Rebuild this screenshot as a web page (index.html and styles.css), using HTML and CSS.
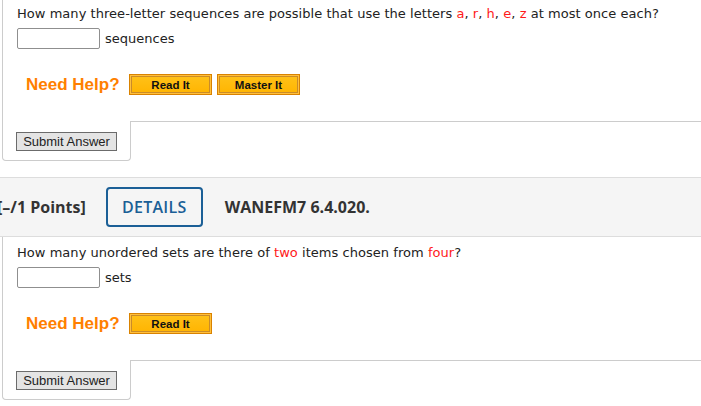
FILE: index.html
```html
<!DOCTYPE html>
<html>
<head>
<meta charset="utf-8">
<link rel="stylesheet" href="styles.css">
</head>
<body>
<div class="q">
  <div class="qbody first">
    <p class="prompt">How many three-letter sequences are possible that use the letters <span class="red">a</span>, <span class="red">r</span>, <span class="red">h</span>, <span class="red">e</span>, <span class="red">z</span> at most once each?</p>
    <div class="answer"><span class="ans"></span><span class="unit">sequences</span></div>
    <div class="help"><span class="need">Need Help?</span><span class="hbtn">Read It</span><span class="hbtn">Master It</span></div>
  </div>
  <div class="foot">
    <div class="submitbox"><span class="submit">Submit Answer</span></div>
    <div class="fill"></div>
  </div>
</div>

<div class="header">
  <span class="points">[–/1 Points]</span>
  <span class="details">DETAILS</span>
  <span class="code">WANEFM7 6.4.020.</span>
</div>

<div class="q">
  <div class="qbody second">
    <p class="prompt">How many unordered sets are there of <span class="red">two</span> items chosen from <span class="red">four</span>?</p>
    <div class="answer"><span class="ans"></span><span class="unit">sets</span></div>
    <div class="help"><span class="need">Need Help?</span><span class="hbtn">Read It</span></div>
  </div>
  <div class="foot">
    <div class="submitbox"><span class="submit">Submit Answer</span></div>
    <div class="fill"></div>
  </div>
</div>
</body>
</html>
```

FILE: styles.css
```css
html, body {
  margin: 0;
  padding: 0;
  background: #fff;
}
body {
  width: 701px;
  overflow: hidden;
  font-family: "DejaVu Sans", Verdana, sans-serif;
  color: #222;
}
.q {
  margin-left: 2px;
}
.qbody {
  border-left: 1px solid #cccccc;
  padding-left: 14px;
  padding-bottom: 26px;
}
.qbody.first { padding-top: 5px; }
.qbody.second { padding-top: 7px; }
.prompt {
  margin: 0 0 5px 0;
  font-size: 13px;
  letter-spacing: 0.04px;
  line-height: 18px;
  height: 18px;
  white-space: nowrap;
}
.red { color: #ff1a1a; }
.answer {
  display: flex;
  align-items: center;
  height: 21px;
}
.ans {
  display: block;
  width: 81px;
  height: 19px;
  border: 1px solid #8f8f8f;
  border-radius: 2px;
  background: #fff;
}
.unit {
  margin-left: 5px;
  font-size: 13px;
  color: #222;
}
.help {
  display: flex;
  align-items: center;
  margin-top: 25px;
  height: 21px;
}
.need {
  margin-left: 9px;
  margin-right: 11px;
  font-family: "Liberation Sans", Arial, sans-serif;
  font-weight: bold;
  font-size: 17px;
  color: #ff8000;
  width: 92px;
  white-space: nowrap;
}
.hbtn {
  display: flex;
  align-items: center;
  justify-content: center;
  box-sizing: border-box;
  width: 83px;
  height: 21px;
  margin-right: 5px;
  border: 1px solid #d98200;
  background: linear-gradient(#ffc21a, #ffb400);
  box-shadow: inset 0 0 0 1px #ffbf3a, inset 0 0 0 2px #c98b2a;
  font-family: "Liberation Sans", Arial, sans-serif;
  font-weight: bold;
  font-size: 11.5px;
  color: #111;
}
.foot {
  display: flex;
}
.submitbox {
  width: 114px;
  border: 1px solid #cccccc;
  border-top: none;
  border-radius: 0 0 4px 4px;
  padding: 11px 0 9px 13px;
}
.submit {
  display: flex;
  align-items: center;
  justify-content: center;
  box-sizing: border-box;
  width: 101px;
  height: 19px;
  border: 1px solid #6b6b6b;
  background: #e4e4e4;
  font-family: "Liberation Sans", Arial, sans-serif;
  font-size: 13px;
  color: #222;
}
.fill {
  flex: 1;
  border-top: 1px solid #cccccc;
}
.header {
  margin-top: 16px;
  height: 58px;
  border-top: 1px solid #dddddd;
  border-bottom: 1px solid #dddddd;
  background: #f5f5f5;
  display: flex;
  align-items: center;
  font-family: "Open Sans", sans-serif;
  font-weight: bold;
  font-size: 16px;
  color: #333;
}
.points {
  margin-left: -3px;
}
.details {
  margin-left: 20px;
  box-sizing: border-box;
  width: 97px;
  height: 40px;
  border: 2px solid #1b5f96;
  border-radius: 4px;
  display: flex;
  align-items: center;
  justify-content: center;
  color: #1b5f96;
  font-weight: 600;
  letter-spacing: 0.3px;
}
.code {
  margin-left: 22px;
}
```
